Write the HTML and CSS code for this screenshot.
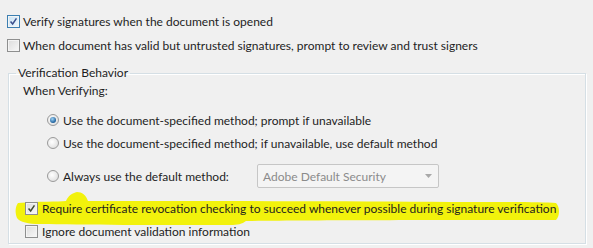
FILE: index.html
```html
<!DOCTYPE html>
<html>
<head>
<meta charset="utf-8">
<link rel="stylesheet" href="styles.css">
</head>
<body>
<div class="page">
  <svg class="marker" viewBox="0 0 593 50" width="593" height="50"><path d="M18 23 C40 21 58 22 66 21 C68 16 72 13 77 12 C82 12 86 15 88 21 C200 21 350 21 450 22 C500 22 540 22 556 23 C560 27 560 36 556 40 C480 40 320 40 246 41 C242 44 238 45 230 45 C160 45 80 45 40 44 C28 44 20 42 17 38 C15 33 15 27 18 23 Z" fill="#f2f20c"/></svg>
  <div class="row top1">
    <span class="cb checked hover"><svg viewBox="0 0 13 13" width="13" height="13"><path d="M3 6.5 L5.5 9.5 L10 2.8" fill="none" stroke="#3c4f8c" stroke-width="1.8"/></svg></span>
    <span class="label">Verify signatures when the document is opened</span>
  </div>
  <div class="row top2">
    <span class="cb"></span>
    <span class="label">When document has valid but untrusted signatures, prompt to review and trust signers</span>
  </div>

  <fieldset class="group">
    <legend class="legend">Verification Behavior</legend>
    <div class="sub">When Verifying:</div>
    <div class="row radio-row r1">
      <span class="rb on"><span class="dot"></span></span>
      <span class="label">Use the document-specified method; prompt if unavailable</span>
    </div>
    <div class="row radio-row r2">
      <span class="rb"></span>
      <span class="label">Use the document-specified method; if unavailable, use default method</span>
    </div>
    <div class="row radio-row r3">
      <span class="rb"></span>
      <span class="label always">Always use the default method:</span>
      <span class="combo"><span class="combo-text">Adobe Default Security</span><svg class="arrow" viewBox="0 0 7 4" width="7" height="4"><path d="M0 0 H7 L3.5 4 Z" fill="#a8a8a8"/></svg></span>
    </div>
    <div class="row inner-row req">
      <span class="cb checked"><svg viewBox="0 0 13 13" width="13" height="13"><path d="M3 6.5 L5.5 9.5 L10 2.8" fill="none" stroke="#3f4a33" stroke-width="1.8"/></svg></span>
      <span class="label">Require certificate revocation checking to succeed whenever possible during signature verification</span>
    </div>
    <div class="row inner-row ign">
      <span class="cb"></span>
      <span class="label">Ignore document validation information</span>
    </div>
  </fieldset>
</div>
</body>
</html>
```
FILE: styles.css
```css
html, body {
  margin: 0;
  padding: 0;
  background: #f0f0f0;
}
.page {
  position: relative;
  width: 593px;
  height: 248px;
  overflow: hidden;
  font-family: Lato, "Noto Sans", sans-serif;
  font-size: 12px;
  color: #1e1e1e;
  padding-top: 9px;
  box-sizing: border-box;
}
.marker {
  position: absolute;
  left: 0;
  top: 180px;
}
.row {
  display: flex;
  align-items: center;
  height: 24px;
  position: relative;
}
.top1, .top2 {
  padding-left: 7px;
}
.top1 .label, .top2 .label {
  margin-left: 3px;
}
.label {
  margin-left: 4px;
  white-space: nowrap;
  position: relative;
}
.cb {
  width: 11px;
  height: 11px;
  border: 1px solid #8e8f8f;
  background: linear-gradient(135deg, #dcdcdc, #f8f8f8);
  box-shadow: inset 0 0 0 1px #f4f4f4;
  display: inline-flex;
  align-items: center;
  justify-content: center;
  flex: none;
  position: relative;
}
.cb svg {
  width: 11px;
  height: 11px;
}
.cb.hover {
  border-color: #3c7fb1;
  background: linear-gradient(135deg, #c8e3f5, #eef7fd);
}
.group {
  position: relative;
  margin: 9px 7px 0 8px;
  padding: 0 0 0 14px;
  border: 1px solid #d5dfe5;
  box-shadow: 1px 1px 0 #ffffff, inset 1px 1px 0 #ffffff;
  height: 178px;
  box-sizing: border-box;
  min-width: 0;
}
.legend {
  padding: 0 2px;
  margin-left: -7px;
  line-height: 14px;
}
.sub {
  height: 22px;
  line-height: 22px;
}
.radio-row {
  padding-left: 24px;
}
.r1 { height: 24px; margin-top: 6px; }
.r2 { height: 22px; }
.r3 { height: 44px; }
.rb {
  width: 10px;
  height: 10px;
  border-radius: 50%;
  border: 1px solid #9a9a9a;
  background: radial-gradient(circle at 40% 40%, #ffffff, #d8d8d8);
  display: inline-flex;
  align-items: center;
  justify-content: center;
  flex: none;
}
.rb .dot {
  width: 6px;
  height: 6px;
  border-radius: 50%;
  background: radial-gradient(circle at 40% 35%, #9fd4f7, #1d5f9a 70%);
}
.always {
  width: 194px;
}
.combo {
  width: 169px;
  height: 22px;
  border: 1px solid #c6c6c6;
  border-radius: 2px;
  background: #f4f4f4;
  display: flex;
  align-items: center;
  justify-content: space-between;
  padding: 0 6px 0 5px;
  box-sizing: content-box;
  color: #8b8b8b;
}
.combo-text {
  white-space: nowrap;
}
.inner-row {
  padding-left: 2px;
}
.req { height: 20px; }
.ign { height: 26px; }
```
